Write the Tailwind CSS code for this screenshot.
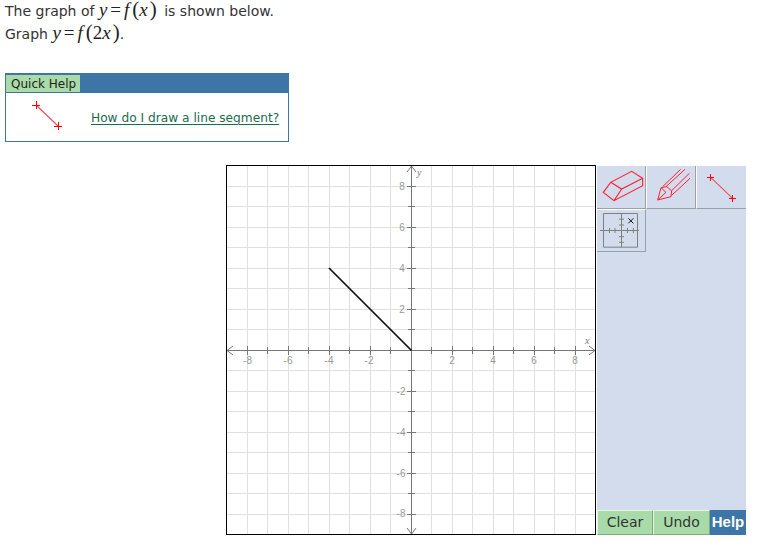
<!DOCTYPE html>
<html><head><meta charset="utf-8"><script src="https://cdn.jsdelivr.net/npm/@tailwindcss/browser@4"></script></head>
<body class="bg-white">
<div class="w-[781px] h-[550px] overflow-hidden font-['DejaVu_Sans',sans-serif] text-[14px] text-[#333]">
  <div class="pl-[5px] h-[74px]">
    <p class="h-[23px] -mt-[1px] leading-[20px] whitespace-nowrap">The graph of <span class="font-['Liberation_Serif',serif] text-[19px] leading-none text-[#222]"><i>y</i><span class="mx-[3px]">=</span><i>f</i><span class="text-[21px] leading-none font-light ml-[3px]">(</span><i>x</i><span class="text-[21px] leading-none font-light ml-[2px]">)</span></span><span class="ml-[3px]"> is shown below.</span></p>
    <p class="h-[24px] leading-[20px] whitespace-nowrap">Graph <span class="font-['Liberation_Serif',serif] text-[19px] leading-none text-[#222]"><i>y</i><span class="mx-[3px]">=</span><i>f</i><span class="text-[21px] leading-none font-light ml-[3px]">(</span>2<i>x</i><span class="text-[21px] leading-none font-light ml-[2px]">)</span></span>.</p>
  </div>
  <div class="ml-[5px] w-[284px] h-[69px] border border-[#3c75a6] box-border">
    <div class="h-[19px] bg-[#3c75a6] pt-px">
      <div class="w-[74px] h-[17px] bg-[#a9dba9] text-[#222] text-[12px] leading-[18px] pl-[5px] whitespace-nowrap">Quick Help</div>
    </div>
    <div class="flex items-start h-[48px]">
      <svg class="ml-[23px] mt-[5px] shrink-0" width="36" height="32" viewBox="0 0 36 32"><path d="M7 7 L29 28" stroke="#ee5060" stroke-width="1.2"/><path d="M3 7.5h8M7.5 3v8M25 28.5h8M29.5 24v8" stroke="#ff0000" stroke-width="1"/></svg>
      <a class="ml-[26px] mt-[16px] text-[12.2px] leading-[18px] text-[#1a6b50] underline underline-offset-[2px] whitespace-nowrap">How do I draw a line segment?</a>
    </div>
  </div>
  <div class="flex ml-[226px] mt-[23px]">
    <svg width="370" height="370" viewBox="226 165 370 370" class="shrink-0 block font-['Liberation_Sans',sans-serif]">
      <rect x="226.5" y="165.5" width="369" height="369" fill="#fff"/>
      <g stroke="#e0e0e0" stroke-width="1">
        <path d="M247.5 166V534M267.5 166V534M288.5 166V534M308.5 166V534M329.5 166V534M349.5 166V534M370.5 166V534M390.5 166V534M431.5 166V534M452.5 166V534M472.5 166V534M493.5 166V534M513.5 166V534M534.5 166V534M554.5 166V534M575.5 166V534"/>
        <path d="M227 186.5H595M227 206.5H595M227 227.5H595M227 247.5H595M227 268.5H595M227 288.5H595M227 309.5H595M227 329.5H595M227 370.5H595M227 391.5H595M227 411.5H595M227 432.5H595M227 452.5H595M227 473.5H595M227 493.5H595M227 514.5H595"/>
      </g>
      <g stroke="#777" stroke-width="1" fill="none">
        <path d="M227 350.5H595M411.5 166V534"/>
        <path d="M247.5 346V355M267.5 347V354M288.5 346V355M308.5 347V354M329.5 346V355M349.5 347V354M370.5 346V355M390.5 347V354M431.5 347V354M452.5 346V355M472.5 347V354M493.5 346V355M513.5 347V354M534.5 346V355M554.5 347V354M575.5 346V355"/>
        <path d="M407 186.5H416M408 206.5H415M407 227.5H416M408 247.5H415M407 268.5H416M408 288.5H415M407 309.5H416M408 329.5H415M408 370.5H415M407 391.5H416M408 411.5H415M407 432.5H416M408 452.5H415M407 473.5H416M408 493.5H415M407 514.5H416"/>
        <path d="M233 346L227 350.5L233 355M589 346L595 350.5L589 355M407 172L411.5 166L416 172M407 528L411.5 534L416 528"/>
      </g>
      <g fill="#999" font-size="10" text-anchor="middle">
        <text x="247.5" y="364">-8</text><text x="288" y="364">-6</text><text x="329" y="364">-4</text><text x="369" y="364">-2</text><text x="452" y="364">2</text><text x="493" y="364">4</text><text x="534" y="364">6</text><text x="575" y="364">8</text>
        <text x="402" y="190">8</text><text x="402" y="231">6</text><text x="402" y="272">4</text><text x="402" y="313">2</text><text x="401" y="395">-2</text><text x="401" y="436">-4</text><text x="401" y="477">-6</text><text x="401" y="517">-8</text>
      </g>
      <g fill="#777" font-size="10" font-style="italic" font-family="Liberation Serif, serif"><text x="585" y="344">x</text><text x="417" y="176">y</text></g>
      <path d="M329 268L411.5 350.5" stroke="#111" stroke-width="1.7"/>
      <rect x="226.5" y="165.5" width="369" height="369" fill="none" stroke="#000" stroke-width="1"/>
    </svg>
    <div class="w-[149px] h-[369px] ml-px mt-px bg-[#d3dced] flex flex-col justify-between shrink-0">
      <div>
        <div class="flex h-[43px]">
          <div class="w-[49px] h-[43px] border-r border-b border-[#9aa0aa] box-border">
            <svg class="block" width="48" height="42" viewBox="21 18 144 126" fill="none" stroke="#ff2030" stroke-width="3.4"><path d="M40 97L62 67L125 34L158 55V77L72 122ZM62 67L95 87L158 55M95 87L72 122"/></svg>
          </div>
          <div class="w-[50px] h-[43px] border-l border-l-white border-r border-b border-r-[#9aa0aa] border-b-[#9aa0aa] box-border">
            <svg class="block" width="48" height="42" viewBox="171 18 144 126" fill="none" stroke="#ff2030" stroke-width="3"><path d="M203 120L213 83L230 80L245 92L243 110ZM213 83L228 97L203 120M218 80L272 28M228 80L285 28M245 92L298 40M245 106L300 55"/></svg>
          </div>
          <div class="w-[50px] h-[43px] border-l border-l-white border-b border-b-[#9aa0aa] box-border">
            <svg class="block" width="49" height="42" viewBox="321 18 147 126" fill="none"><path d="M362 52L428 115" stroke="#f0505f" stroke-width="3.4"/><path d="M351 52.5H372M361.5 42V63M417 115.5H438M427.5 105V126" stroke="#ff0000" stroke-width="3"/></svg>
          </div>
        </div>
        <div class="w-[49px] h-[43px] border-t border-t-white border-r border-b border-r-[#9aa0aa] border-b-[#9aa0aa] box-border">
          <svg class="block" width="48" height="41" viewBox="21 150 144 123" fill="none" stroke="#808080" stroke-width="3"><path d="M40.5 160.500H142.500V261.500H40.500ZM30 211.500H147M94.500 160V262M58.500 204V219M75 204V219M112.500 204V219M130 204V219M87 177.500H102M87 195H102M87 230H102M87 247H102"/><path d="M115 175L130 190M130 175L115 190" stroke="#111"/></svg>
        </div>
      </div>
      <div class="flex h-[25px] text-[14px]">
        <div class="w-[56px] bg-[#a9dba9] border border-[#e4f3e4] border-r-[#7fa87f] border-b-[#7fa87f] box-border flex items-center justify-center text-[#333]">Clear</div>
        <div class="w-[57px] bg-[#a9dba9] border border-[#e4f3e4] border-r-[#7fa87f] border-b-[#7fa87f] box-border flex items-center justify-center text-[#333]">Undo</div>
        <div class="w-[36px] bg-[#3c75a6] text-white font-bold flex items-center justify-center text-[15px] font-['Liberation_Sans',sans-serif]">Help</div>
      </div>
    </div>
  </div>
</div>
</body></html>
